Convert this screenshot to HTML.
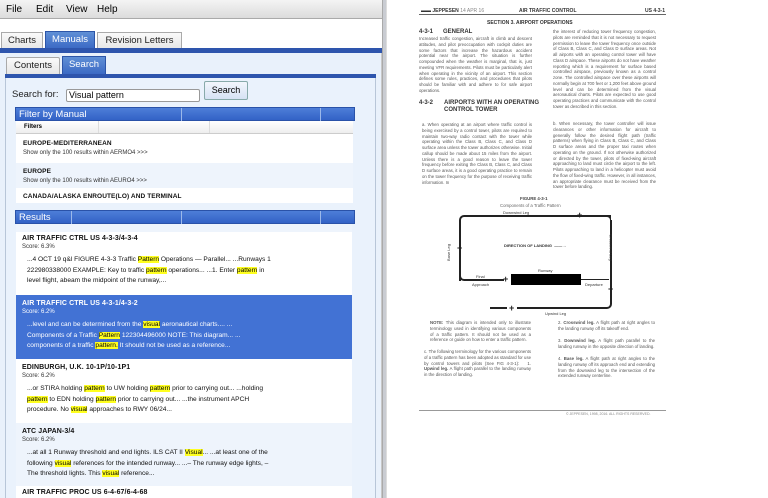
<!DOCTYPE html>
<html><head><meta charset="utf-8"><style>
*{margin:0;padding:0;box-sizing:border-box}
body{width:768px;height:498px;overflow:hidden;background:#fff;font-family:"Liberation Sans",sans-serif;position:relative}
.a{position:absolute}
.menu{left:0;top:0;width:382px;height:19px;background:linear-gradient(#f4f4f4,#dcdcdc);border-bottom:1px solid #aaa;font-size:10px}
.menu span{position:absolute;top:4px}
.tab{position:absolute;height:17px;font-size:9.5px;text-align:center;line-height:15px;border:1px solid #aaa;border-bottom:none;background:linear-gradient(#fafafa,#e6e6e6);color:#222}
.tab.on{background:linear-gradient(#5f8fd6,#3a68c4);color:#fff;border-color:#2c55a8}
.hdr{position:absolute;height:14px;background:linear-gradient(#4d7ed8,#3362c6);color:#fff;font-size:9.5px;line-height:13px;padding-left:3px;border:1px solid #2a52a8}
.hdr i{position:absolute;top:0;width:1px;height:13px;background:#9bb8ea}
.t{font-size:7px;font-weight:bold;color:#111;letter-spacing:.1px}
.s{font-size:6px;color:#333}
.b{font-size:6.6px;color:#111;line-height:10.5px}
mark{background:#ffff20;color:#000}
.sel .t,.sel .s,.sel .b{color:#fff}
.d{font-size:4.3px;color:#555;line-height:5.75px;text-align:justify}
.ln{position:absolute;background:#222}
.pl{position:absolute;font-size:9px;font-weight:bold;color:#222;line-height:9px}
</style></head><body>
<div class="a menu"><span style="left:6px">File</span><span style="left:36px">Edit</span><span style="left:66px">View</span><span style="left:97px">Help</span></div>
<div class="tab" style="left:1px;top:32px;width:42px">Charts</div>
<div class="tab on" style="left:45px;top:31px;width:50px;height:18px">Manuals</div>
<div class="tab" style="left:97px;top:32px;width:85px">Revision Letters</div>
<div class="a" style="left:0;top:48px;width:382px;height:5px;background:#2e55ad"></div>
<div class="a" style="left:0;top:53px;width:382px;height:445px;background:#e9f1fb;border-right:1px solid #c8c8c8"></div>
<div class="tab" style="left:6px;top:57px;width:54px;height:17px;border-radius:2px 2px 0 0">Contents</div>
<div class="tab on" style="left:62px;top:56px;width:44px;height:19px">Search</div>
<div class="a" style="left:5px;top:74px;width:371px;height:4px;background:#2e55ad"></div>
<div class="a" style="left:5px;top:78px;width:371px;height:420px;border-left:1px solid #b8c6d8;border-right:1px solid #b8c6d8;background:#eaf2fc"></div>
<div class="a" style="left:12px;top:89px;font-size:9.5px;color:#222">Search for:</div>
<div class="a" style="left:66px;top:89px;width:134px;height:13px;background:#fff;border:1px solid #999;border-radius:2px;font-size:9px;padding-left:2px;line-height:11px">Visual pattern</div>
<div class="a" style="left:204px;top:81px;width:44px;height:19px;border:1px solid #8aa;background:linear-gradient(#f2f6fc,#d6e2f4);font-size:9px;text-align:center;line-height:16px;border-radius:2px">Search</div>
<div class="hdr" style="left:15px;top:107px;width:340px">Filter by Manual<i style="left:165px"></i><i style="left:304px"></i></div>
<div class="a" style="left:16px;top:121px;width:337px;height:82px;background:#fff;overflow:hidden">
 <div style="height:13px;background:linear-gradient(#fff,#eee);border-bottom:1px solid #ccc;font-size:6px;font-weight:bold;padding:3px 0 0 8px;position:relative">Filters<i style="position:absolute;left:82px;top:0;width:1px;height:12px;background:#ddd"></i><i style="position:absolute;left:193px;top:0;width:1px;height:12px;background:#ddd"></i></div>
 <div style="height:29px;padding:6px 0 0 7px"><div class="t" style="font-size:6.5px">EUROPE-MEDITERRANEAN</div><div class="s" style="margin-top:3px">Show only the 100 results within AERMO4 &gt;&gt;&gt;</div></div>
 <div style="height:25px;padding:5px 0 0 7px;background:#eef4fc"><div class="t" style="font-size:6.5px">EUROPE</div><div class="s" style="margin-top:3px">Show only the 100 results within AEURO4 &gt;&gt;&gt;</div></div>
 <div style="padding:5px 0 0 7px"><div class="t" style="font-size:6.5px">CANADA/ALASKA ENROUTE(LO) AND TERMINAL</div></div>
</div>
<div class="hdr" style="left:15px;top:210px;width:340px">Results<i style="left:55px"></i><i style="left:165px"></i><i style="left:304px"></i></div>
<div class="a" style="left:16px;top:224px;width:336px;height:274px;background:#fff;overflow:hidden">
 <div style="height:8px;background:#eef4fc"></div>
 <div style="height:63px;padding:3px 0 0 6px"><div class="t">AIR TRAFFIC CTRL US 4-3-3/4-3-4</div><div class="s" style="margin-top:2px">Score: 6.3%</div>
  <div class="b" style="padding:5px 0 0 5px">...4 OCT 19 q&amp;l FIGURE 4-3-3 Traffic <mark>Pattern</mark> Operations — Parallel... ...Runways 1<br>222980338000 EXAMPLE: Key to traffic <mark>pattern</mark> operations... ...1. Enter <mark>pattern</mark> in<br>level flight, abeam the midpoint of the runway,...</div></div>
 <div class="sel" style="height:64px;padding:5px 0 0 6px;background:#4272d4"><div class="t">AIR TRAFFIC CTRL US 4-3-1/4-3-2</div><div class="s" style="margin-top:2px">Score: 6.2%</div>
  <div class="b" style="padding:5px 0 0 5px">...level and can be determined from the <mark>visual</mark> aeronautical charts.... ...<br>Components of a Traffic <mark>Pattern</mark> 122304496000 NOTE: This diagram... ...<br>components of a traffic <mark>pattern.</mark> It should not be used as a reference...</div></div>
 <div style="height:64px;padding:5px 0 0 6px"><div class="t">EDINBURGH, U.K. 10-1P/10-1P1</div><div class="s" style="margin-top:2px">Score: 6.2%</div>
  <div class="b" style="padding:5px 0 0 5px">...or STIRA holding <mark>pattern</mark> to UW holding <mark>pattern</mark> prior to carrying out... ...holding<br><mark>pattern</mark> to EDN holding <mark>pattern</mark> prior to carrying out... ...the instrument APCH<br>procedure. No <mark>visual</mark> approaches to RWY 06/24...</div></div>
 <div style="height:63px;padding:5px 0 0 6px;background:#eef4fc"><div class="t">ATC JAPAN-3/4</div><div class="s" style="margin-top:2px">Score: 6.2%</div>
  <div class="b" style="padding:5px 0 0 5px">...at all 1 Runway threshold and end lights. ILS CAT II <mark>Visual</mark>... ...at least one of the<br>following <mark>visual</mark> references for the intended runway... ...– The runway edge lights, –<br>The threshold lights. This <mark>visual</mark> reference...</div></div>
 <div style="padding:3px 0 0 6px"><div class="t">AIR TRAFFIC PROC US 6-4-67/6-4-68</div></div>
</div>
<div class="a" style="left:382px;top:0;width:5px;height:498px;background:#c9ccd2;border-left:1px solid #aaa;border-right:1px solid #ddd"></div>

<div class="a" style="left:419px;top:8px;width:247px;height:7px;border-bottom:1px solid #666;font-size:5px;color:#333">
 <span style="position:absolute;left:2px;font-weight:bold">▬▬ JEPPESEN <span style="font-weight:normal;color:#888">14 APR 16</span></span>
 <span style="position:absolute;left:100px;font-weight:bold">AIR TRAFFIC CONTROL</span>
 <span style="position:absolute;right:1px;font-weight:bold">US 4-3-1</span></div>
<div class="a" style="left:487px;top:20px;font-size:5px;font-weight:bold;color:#333">SECTION 3. AIRPORT OPERATIONS</div>
<div class="a" style="left:419px;top:29px;font-size:6px;font-weight:bold;color:#333">4-3-1 &nbsp;&nbsp;&nbsp;&nbsp; GENERAL</div>
<div class="a d" style="left:419px;top:36px;width:113px;height:61px;overflow:hidden">Increased traffic congestion, aircraft in climb and descent attitudes, and pilot preoccupation with cockpit duties are some factors that increase the hazardous accident potential near the airport. The situation is further compounded when the weather is marginal, that is, just meeting VFR requirements. Pilots must be particularly alert when operating in the vicinity of an airport. This section defines some rules, practices, and procedures that pilots should be familiar with and adhere to for safe airport operations.</div>
<div class="a" style="left:419px;top:100px;font-size:6px;font-weight:bold;color:#333;line-height:7px">4-3-2<span style="position:absolute;left:25px;width:100px">AIRPORTS WITH AN OPERATING CONTROL TOWER</span></div>
<div class="a d" style="left:422px;top:122px;width:110px;height:69px;overflow:hidden">a. When operating at an airport where traffic control is being exercised by a control tower, pilots are required to maintain two-way radio contact with the tower while operating within the Class B, Class C, and Class D surface area unless the tower authorizes otherwise. Initial callup should be made about 15 miles from the airport. Unless there is a good reason to leave the tower frequency before exiting the Class B, Class C, and Class D surface areas, it is a good operating practice to remain on the tower frequency for the purpose of receiving traffic information. In</div>
<div class="a d" style="left:553px;top:29px;width:103px;height:86px;overflow:hidden">the interest of reducing tower frequency congestion, pilots are reminded that it is not necessary to request permission to leave the tower frequency once outside of Class B, Class C, and Class D surface areas. Not all airports with an operating control tower will have Class D airspace. These airports do not have weather reporting which is a requirement for surface based controlled airspace, previously known as a control zone. The controlled airspace over these airports will normally begin at 700 feet or 1,200 feet above ground level and can be determined from the visual aeronautical charts. Pilots are expected to use good operating practices and communicate with the control tower as described in this section.</div>
<div class="a d" style="left:553px;top:121px;width:103px;height:70px;overflow:hidden">b. When necessary, the tower controller will issue clearances or other information for aircraft to generally follow the desired flight path (traffic patterns) when flying in Class B, Class C, and Class D surface areas and the proper taxi routes when operating on the ground. If not otherwise authorized or directed by the tower, pilots of fixed-wing aircraft approaching to land must circle the airport to the left. Pilots approaching to land in a helicopter must avoid the flow of fixed-wing traffic. However, in all instances, an appropriate clearance must be received from the tower before landing.</div>
<div class="a" style="left:520px;top:196px;font-size:4.3px;color:#444;font-weight:bold">FIGURE 4-3-1</div>
<div class="a" style="left:500px;top:203px;font-size:4.3px;color:#666">Components of a Traffic Pattern</div>
<div class="a" style="left:459px;top:215px;width:153px;height:66px;border:2px solid #222;border-bottom:none;border-right:none;border-radius:5px 0 0 0"></div>
<div class="a" style="left:459px;top:270px;width:10px;height:11px;border-left:2px solid #222;border-bottom:2px solid #222;border-radius:0 0 0 5px"></div>
<div class="ln" style="left:466px;top:279px;width:38px;height:1.5px"></div>
<div class="a" style="left:600px;top:215px;width:12px;height:94px;border-top:2px solid #222;border-right:2px solid #222;border-radius:0 5px 5px 0;border-bottom:2px solid #222"></div>
<div class="ln" style="left:517px;top:307px;width:85px;height:2px"></div>
<div class="ln" style="left:490px;top:307px;width:17px;height:2px"></div>
<div class="a" style="left:611px;top:212px;width:3px;height:8px;background:#fff"></div>
<div class="a" style="left:511px;top:274px;width:70px;height:11px;background:#000"></div>
<div class="ln" style="left:581px;top:279px;width:28px;height:1px"></div>
<div class="pl" style="left:577px;top:211px">+</div>
<div class="pl" style="left:457px;top:244px">+</div>
<div class="pl" style="left:503px;top:275px">+</div>
<div class="pl" style="left:608px;top:285px">+</div>
<div class="pl" style="left:509px;top:304px">+</div>
<div class="a" style="left:503px;top:210px;font-size:4px;color:#333">Downwind Leg</div>
<div class="a" style="left:504px;top:243px;font-size:4px;color:#333;font-weight:bold">DIRECTION OF LANDING &nbsp;——→</div>
<div class="a" style="left:538px;top:268px;font-size:4px;color:#333">Runway</div>
<div class="a" style="left:476px;top:274px;font-size:4px;color:#333">Final</div>
<div class="a" style="left:472px;top:282px;font-size:4px;color:#333">Approach</div>
<div class="a" style="left:585px;top:282px;font-size:4px;color:#333">Departure</div>
<div class="a" style="left:545px;top:311px;font-size:4px;color:#333">Upwind Leg</div>
<div class="a" style="left:440px;top:250px;font-size:4px;color:#333;transform:rotate(-90deg)">Base Leg</div>
<div class="a" style="left:598px;top:245px;font-size:4px;color:#333;transform:rotate(90deg)">Crosswind Leg</div>
<div class="a d" style="left:430px;top:320px;width:101px;height:23px;overflow:hidden"><b>NOTE:</b> This diagram is intended only to illustrate terminology used in identifying various components of a traffic pattern. It should not be used as a reference or guide on how to enter a traffic pattern.</div>
<div class="a d" style="left:424px;top:349px;width:107px;height:35px;overflow:hidden">c. The following terminology for the various components of a traffic pattern has been adopted as standard for use by control towers and pilots (See FIG 4-3-1): &nbsp; 1. <b>Upwind leg.</b> A flight path parallel to the landing runway in the direction of landing.</div>
<div class="a d" style="left:558px;top:320px;width:97px;height:17px;overflow:hidden">2. <b>Crosswind leg.</b> A flight path at right angles to the landing runway off its takeoff end.</div>
<div class="a d" style="left:558px;top:338px;width:97px;height:17px;overflow:hidden">3. <b>Downwind leg.</b> A flight path parallel to the landing runway in the opposite direction of landing.</div>
<div class="a d" style="left:558px;top:356px;width:97px;height:23px;overflow:hidden">4. <b>Base leg.</b> A flight path at right angles to the landing runway off its approach end and extending from the downwind leg to the intersection of the extended runway centerline.</div>
<div class="a" style="left:419px;top:410px;width:247px;height:1px;background:#999"></div>
<div class="a" style="left:566px;top:412px;font-size:3.5px;color:#888">© JEPPESEN, 1998, 2016. ALL RIGHTS RESERVED.</div>
</body></html>
